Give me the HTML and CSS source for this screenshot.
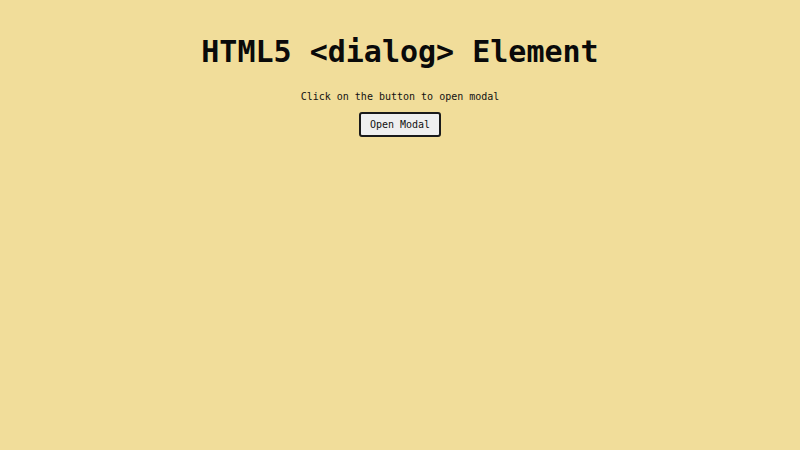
FILE: index.html
```html
<!DOCTYPE html>
<html lang="en">
<head>
<meta charset="utf-8">
<title>HTML5 &lt;dialog&gt; Element</title>
<link rel="stylesheet" href="styles.css">
</head>
<body>
  <main class="page">
    <h1 class="title">HTML5 &lt;dialog&gt; Element</h1>
    <p class="lead">Click on the button to open modal</p>
    <button class="open-btn" type="button">Open Modal</button>
  </main>
</body>
</html>
```
FILE: styles.css
```css
html, body {
  margin: 0;
  padding: 0;
}

body {
  background: #f1dd9a;
  color: #111;
  font-family: "DejaVu Sans Mono", monospace;
  width: 800px;
  height: 450px;
}

.page {
  display: flex;
  flex-direction: column;
  align-items: center;
  padding-top: 34px;
}

.title {
  margin: 0;
  font-size: 30px;
  font-weight: bold;
  line-height: 36px;
  color: #0a0a0a;
}

.lead {
  margin: 21px 0 0;
  font-size: 10px;
  line-height: 12px;
}

.open-btn {
  margin-top: 9px;
  font-family: "DejaVu Sans Mono", monospace;
  font-size: 10px;
  line-height: 13px;
  padding: 4px 9px;
  background: #efefef;
  color: #111;
  border: 2px solid #1a1a1a;
  border-radius: 3px;
}
```
